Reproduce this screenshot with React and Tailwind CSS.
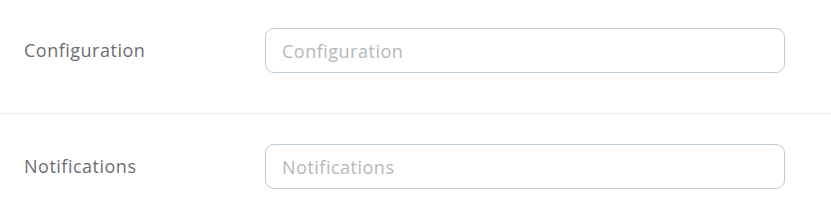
const FIELDS = [
  { label: "Configuration", pad: "pt-[28px] pb-[40px]" },
  { label: "Notifications", pad: "pt-[30px] pb-[26px]" },
];

export default function App() {
  return (
    <div className="w-[831px] h-[215px] bg-white font-['Open_Sans',sans-serif] overflow-hidden">
      {FIELDS.map(({ label, pad }, i) => (
        <div
          key={label}
          className={`flex items-center ${pad} ${i > 0 ? "border-t border-[#ececec]" : ""}`}
        >
          <label className="w-[265px] pl-6 text-[18px] tracking-[0.5px] text-[#6f6c75]">{label}</label>
          <input
            type="text"
            placeholder={label}
            className="w-[520px] h-[45px] rounded-[9px] border border-[#bccbd8] px-4 text-[18px] tracking-[0.5px] text-[#444] placeholder:text-[#b5b7bc] outline-none"
          />
        </div>
      ))}
    </div>
  );
}
